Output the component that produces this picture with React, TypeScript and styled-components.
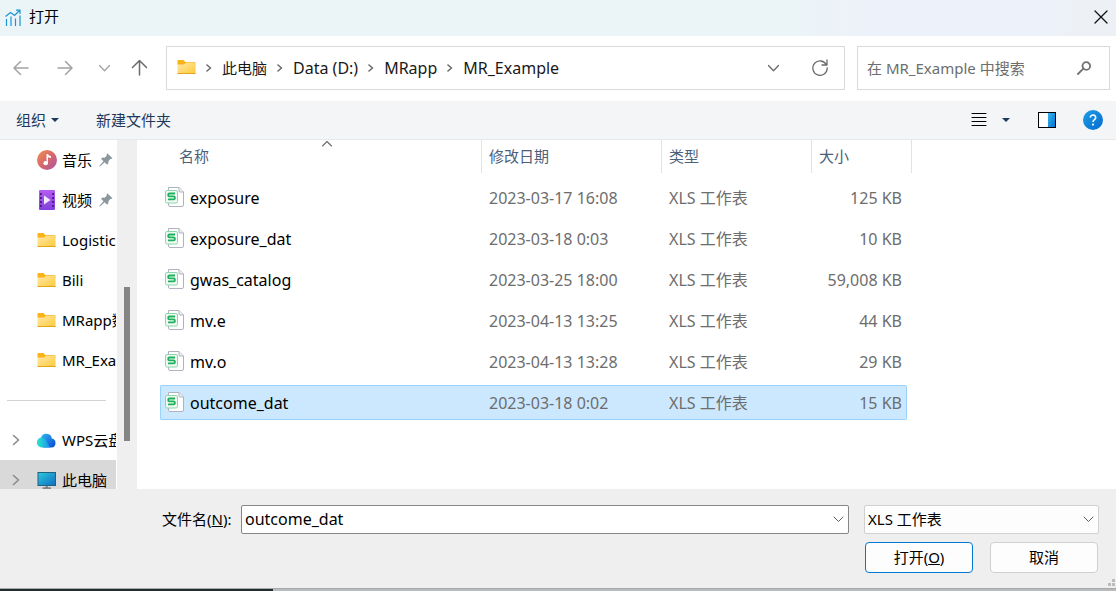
import React, { useState } from "react";
import styled, { createGlobalStyle, css } from "styled-components";

const GlobalStyle = createGlobalStyle`
  * { box-sizing: border-box; }
  body {
    margin: 0;
    color: #000;
    font: 16px/20px "Noto Sans", "Noto Sans CJK SC", sans-serif;
  }
  button, input, select { font: inherit; color: inherit; }
  svg { display: block; flex: none; }
`;

const Page = styled.div`
  display: flex;
  flex-direction: column;
  height: 100vh;
  background: #fff;
  overflow: hidden;
`;

const TitleBar = styled.header`
  display: flex;
  align-items: center;
  gap: 8px;
  flex: none;
  height: 36px;
  padding: 0 8px 2px 5px;
  background: linear-gradient(90deg, #ebf4f7 0 72%, #edf2fa 78% 94%, #edf1f6 96%);
`;

const Title = styled.h1`
  flex: 1;
  margin: 0;
  padding-bottom: 2px;
  font-size: 15px;
  font-weight: 400;
`;

const IconButton = styled.button`
  display: flex;
  align-items: center;
  justify-content: center;
  padding: 0;
  border: 0;
  background: none;
`;

const NavBar = styled.nav`
  display: flex;
  align-items: center;
  gap: 12px;
  flex: none;
  height: 65px;
  padding: 0 6px 2px 13px;
`;

const NavButtons = styled.div`
  display: flex;
  align-items: center;
  gap: 26px;
  width: 141px;
`;

const NavEnd = styled.div`
  display: flex;
  align-items: center;
  gap: 20px;
`;

const AddressBar = styled.div`
  display: flex;
  align-items: center;
  flex: 1;
  min-width: 0;
  height: 44px;
  padding: 0 16px 0 10px;
  border: 1px solid #d9d9d9;
`;

const Crumbs = styled.ol`
  display: flex;
  align-items: center;
  flex: 1;
  margin: 0;
  padding: 0 0 0 10px;
  list-style: none;
`;

const Crumb = styled.li`
  display: flex;
  align-items: center;
  gap: 10px;
  margin-right: 10px;
  white-space: nowrap;
`;

const CrumbLink = styled.a<{ $cjk?: boolean }>`
  color: #191919;
  font-size: ${(p) => (p.$cjk ? 15 : 16)}px;
  text-decoration: none;
`;

const AddressActions = styled.div`
  display: flex;
  align-items: center;
  gap: 32px;
`;

const SearchBox = styled.div`
  display: flex;
  align-items: center;
  width: 253px;
  height: 44px;
  padding: 0 18px 0 9px;
  border: 1px solid #d9d9d9;
`;

const SearchInput = styled.input`
  flex: 1;
  min-width: 0;
  padding: 0;
  border: 0;
  outline: 0;
  background: none;
  font-size: 15px;
  &::placeholder { color: #6d6d6d; opacity: 1; }
`;

const Toolbar = styled.div`
  display: flex;
  align-items: center;
  gap: 37px;
  flex: none;
  height: 39px;
  padding: 0 13px 0 16px;
  border-bottom: 1px solid #e6e8ea;
  background: #f4f5f7;
`;

const ToolButton = styled.button`
  display: flex;
  align-items: center;
  gap: 5px;
  padding: 0;
  border: 0;
  background: none;
  color: #1e395b;
  font-size: 15px;
`;

const ToolbarEnd = styled.div`
  display: flex;
  align-items: center;
  gap: 27px;
  margin-left: auto;
`;

const ViewControls = styled.div`
  display: flex;
  align-items: center;
  gap: 15px;
  padding-right: 1px;
`;

const Main = styled.main`
  display: flex;
  flex: 1;
  min-height: 0;
`;

const Sidebar = styled.ul`
  width: 116px;
  margin: 0;
  padding: 0;
  overflow: hidden;
  list-style: none;
`;

const SideItem = styled.li<{ $active?: boolean }>`
  display: grid;
  grid-template-columns: 20px 20px max-content 16px;
  column-gap: 5px;
  align-items: center;
  justify-items: start;
  height: 40px;
  padding-left: 12px;
  background: ${(p) => (p.$active ? "#d9d9d9" : "transparent")};
  white-space: nowrap;
`;

const SideLabel = styled.a`
  color: #000;
  font-size: 15px;
  text-decoration: none;
`;

const PinSlot = styled.span`
  justify-self: end;
`;

const Divider = styled.li`
  display: flex;
  align-items: center;
  height: 40px;
  padding: 0 10px 0 7px;
  &::after { content: ""; flex: 1; height: 1px; background: #d2d2d2; }
`;

const ScrollTrack = styled.div`
  display: flex;
  flex-direction: column;
  align-items: center;
  flex: none;
  width: 20px;
  margin-left: 1px;
  padding-top: 147px;
  background: #efefef;
`;

const ScrollThumb = styled.div`
  width: 6px;
  height: 76%;
  background: #858585;
`;

const FilePane = styled.section`
  flex: 1;
  min-width: 0;
  padding-left: 23px;
  overflow: hidden;
`;

const FileTable = styled.table`
  width: 752px;
  table-layout: fixed;
  border-collapse: collapse;
  th, td { padding: 0; font-weight: 400; text-align: left; }
`;

const HeadCell = styled.div<{ $first?: boolean }>`
  position: relative;
  height: 33px;
  margin-bottom: 4px;
  padding: 6px 0 0 ${(p) => (p.$first ? 19 : 7)}px;
  border-right: 1px solid #e3e3e3;
  color: #4c607a;
  font-size: 15px;
`;

const SortMark = styled.span`
  position: absolute;
  top: 0;
  left: 50%;
`;

const RowCell = styled.div<{ $selected?: boolean; $edge?: "start" | "end" }>`
  display: flex;
  align-items: center;
  justify-content: ${(p) => (p.$edge === "end" ? "flex-end" : "flex-start")};
  height: 35px;
  margin: 3px 0;
  padding: ${(p) => (p.$edge === "start" ? "0 0 0 5px" : p.$edge === "end" ? "0 5px 0 0" : "0 0 0 7px")};
  border: 0 solid transparent;
  border-width: 1px 0;
  color: ${(p) => (p.$edge === "start" ? "#000" : "#6d6d6d")};
  gap: 6px;
  svg { margin-bottom: 2px; }
  ${(p) => p.$selected && css`
    background: #cce8ff;
    border-color: #99d1ff;
    ${p.$edge === "start" && "border-left-width: 1px; border-radius: 2px 0 0 2px; padding-left: 4px;"}
    ${p.$edge === "end" && "border-right-width: 1px; border-radius: 0 2px 2px 0; padding-right: 4px;"}
  `}
`;

const Footer = styled.footer`
  display: flex;
  flex-direction: column;
  gap: 8px;
  position: relative;
  flex: none;
  padding: 16px 17px 15px 162px;
  border-bottom: 1px solid #a9a9a9;
  background: #efefef;
`;

const FooterRow = styled.div`
  display: flex;
  align-items: center;
  gap: 15px;
`;

const NameLabel = styled.label`
  width: 79px;
  margin-right: -15px;
  padding-bottom: 2px;
  font-size: 15px;
  white-space: nowrap;
`;

const Field = styled.div<{ $filter?: boolean }>`
  display: flex;
  align-items: center;
  flex: ${(p) => (p.$filter ? "0 0 235px" : "1")};
  min-width: 0;
  height: 29px;
  padding-right: 4px;
  border: 1px solid ${(p) => (p.$filter ? "#d0d0d0" : "#868686")};
  border-radius: 2px;
  background: ${(p) => (p.$filter ? "#fdfdfd" : "#fff")};
`;

const fieldText = css`
  flex: 1;
  min-width: 0;
  height: 27px;
  padding: 0 0 2px 3px;
  border: 0;
  outline: 0;
  background: none;
`;

const NameInput = styled.input`${fieldText}`;

const TypeSelect = styled.select`
  ${fieldText}
  appearance: none;
  font-size: 15px;
`;

const Actions = styled.div`
  display: flex;
  justify-content: flex-end;
  gap: 17px;
  padding-right: 1px;
`;

const ActionButton = styled.button<{ $primary?: boolean }>`
  width: 108px;
  height: 31px;
  padding: 0 0 2px;
  border: 1px solid ${(p) => (p.$primary ? "#0078d4" : "#d0d0d0")};
  border-radius: 4px;
  background: #fdfdfd;
  font-size: 15px;
`;

const Grip = styled.svg`
  position: absolute;
  right: 0;
  bottom: 1px;
`;

const Backdrop = styled.div`
  flex: none;
  height: 2px;
  background: linear-gradient(90deg, #1f2d33 0 273px, #b9bcbe 273px);
`;

const Glyph = ({ d, w, h, color = "#6b6b6b", stroke = 1.5 }: { d: string; w: number; h: number; color?: string; stroke?: number }) => (
  <svg width={w} height={h} viewBox={`0 0 ${w} ${h}`} fill="none" stroke={color} strokeWidth={stroke} strokeLinecap="round" strokeLinejoin="round" aria-hidden="true">
    <path d={d} />
  </svg>
);

const Chevron = ({ color = "#6b6b6b" }) => <Glyph w={12} h={8} color={color} stroke={1.3} d="M.5 1.5 5.500 6.8 10.500 1.5" />;
const FieldChevron = () => <Glyph w={11} h={7} color="#5c5c5c" stroke={1} d="M1 1 5.500 5.500 10 1" />;
const Caret = () => (
  <svg width="8" height="4" viewBox="0 0 8 4" aria-hidden="true"><path d="M0 0h8L4 4z" fill="#1e395b" /></svg>
);

const AppLogo = () => (
  <svg width="16" height="17" viewBox="0 0 16 17" fill="none" stroke="#1c94d4" strokeWidth="1.2" aria-hidden="true">
    <path d="M1.5 10v7M6 7.500v9.500M10.500 9.500v7.500M15 6.500v10.500" />
    <path d="M.5 7.500 5.500 3.500 9.500 6.500 14.500 1.500M11 1.200h4v3.800" />
  </svg>
);

const Folder = () => (
  <svg width="19" height="15" viewBox="0 0 19 15" aria-hidden="true">
    <defs>
      <linearGradient id="folder" x1="0" y1="0" x2="1" y2="1">
        <stop offset="0" stopColor="#ffe9a6" /><stop offset="1" stopColor="#ffc938" />
      </linearGradient>
    </defs>
    <path d="M.5 .8Q.5 0 1.300 0h5.200l2 2.200H17.700q.8 0 .8.8V5H.5z" fill="#f9b316" />
    <path d="M.5 4.500h6.500l2-1.500H18.500V13.500q0 .5-.5.5H1q-.5 0-.5-.5z" fill="url(#folder)" />
    <path d="M.5 13h18v.6q0 .4-.5.4H1q-.5 0-.5-.4z" fill="#e6a41c" />
  </svg>
);

const Music = () => (
  <svg width="20" height="20" viewBox="0 0 20 20" aria-hidden="true">
    <defs>
      <linearGradient id="music" x1="0" y1="0" x2="1" y2="1">
        <stop offset="0" stopColor="#f2914f" /><stop offset=".5" stopColor="#d7686c" /><stop offset="1" stopColor="#a655a8" />
      </linearGradient>
    </defs>
    <circle cx="10" cy="10" r="10" fill="url(#music)" />
    <ellipse cx="8.700" cy="13.200" rx="2.300" ry="2.100" fill="#fff" />
    <path d="M9.500 4h1.400q.6 1.800 3 2v1.900q-2 0-3-.9v6.200H9.500z" fill="#fff" />
  </svg>
);

const Video = () => (
  <svg width="20" height="20" viewBox="0 0 20 20" aria-hidden="true">
    <defs>
      <linearGradient id="video" x1="0" y1="0" x2="0" y2="1">
        <stop offset="0" stopColor="#b45cf0" /><stop offset="1" stopColor="#8440dc" />
      </linearGradient>
    </defs>
    <rect x="2" width="16" height="20" rx="1" fill="url(#video)" />
    <path d="M3.900 3v16M16.100 3v16" stroke="#44207e" strokeWidth="1.800" strokeDasharray="2 2" />
    <path d="M7 5.500 13.500 10 7 14.500z" fill="#f1e8fb" />
  </svg>
);

const Cloud = () => (
  <svg width="19" height="15" viewBox="0 0 19 15" aria-hidden="true">
    <defs>
      <linearGradient id="cloudBack" x1="0" y1="0" x2="1" y2="1">
        <stop offset="0" stopColor="#2fb6f4" /><stop offset="1" stopColor="#0a47cf" />
      </linearGradient>
      <linearGradient id="cloudFront" x1="0" y1="0" x2="1" y2="0">
        <stop offset="0" stopColor="#2ce8cb" /><stop offset="1" stopColor="#1590ee" />
      </linearGradient>
    </defs>
    <path d="M4 5a5.500 5.500 0 0 1 10.800.6A4.500 4.500 0 0 1 14.500 14.500H6z" fill="url(#cloudBack)" />
    <path d="M4.800 4.500A5 5 0 0 0 4.800 14.500H13L9.500 8Q8 4.600 4.800 4.500z" fill="url(#cloudFront)" />
  </svg>
);

const Computer = () => (
  <svg width="19" height="17" viewBox="0 0 19 17" aria-hidden="true">
    <defs>
      <linearGradient id="screen" x1="0" y1="0" x2="1" y2="1">
        <stop offset="0" stopColor="#2ccbe0" /><stop offset="1" stopColor="#0f6cbd" />
      </linearGradient>
    </defs>
    <rect x="1" y=".5" width="17.500" height="13" fill="url(#screen)" stroke="#22617f" />
    <path d="M8.500 14H11v2H8.500z" fill="#8a9298" /><path d="M5.500 15.500H14v1.200H5.500z" fill="#5c6166" />
  </svg>
);

const Pin = () => (
  <svg width="14" height="14" viewBox="0 0 14 14" fill="#8b969e" aria-hidden="true">
    <path d="M8.200.3 13.500 5.300Q12.500 6.300 11.400 6L9.400 8.200Q9.900 10.500 8.300 11.700L5.600 9.200 1 13.600.3 13 4.500 8.200 2 5.700Q3.200 4.200 5.700 4.700L7.800 2.500Q7.300 1.300 8.200.3z" />
  </svg>
);

const SheetIcon = () => (
  <svg width="19" height="20" viewBox="0 0 19 20" fill="none" aria-hidden="true">
    <path d="M3.500.5h10.500l4.500 4.500V18q0 1.500-1.500 1.500H5q-1.500 0-1.500-1.500z" fill="#fff" stroke="#afb3bf" />
    <path d="M14 .5V4q0 1 1 1h3.500" fill="#eceef2" stroke="#afb3bf" />
    <rect x=".5" y="3.500" width="12" height="12.500" rx="1.500" fill="#effaf3" stroke="#8bd7aa" />
    <path d="M10 6.500H4.500q-1.300 0-1.300 1.400T4.500 9.400h4q1.400 0 1.400 1.500t-1.400 1.500H3" stroke="#1eb15d" strokeWidth="1.900" />
  </svg>
);

const Side = ({ icon, label, pinned, expandable, active }: { icon: React.ReactNode; label: string; pinned?: boolean; expandable?: boolean; active?: boolean }) => (
  <SideItem $active={active}>
    {expandable ? <IconButton aria-label={`展开 ${label}`}><Glyph w={8} h={12} color="#8a8a8a" stroke={1.6} d="M1.500 1.500 6.500 6 1.500 10.500" /></IconButton> : <span />}
    {icon}
    <SideLabel href="#">{label}</SideLabel>
    {pinned && <PinSlot><Pin /></PinSlot>}
  </SideItem>
);

const files = [
  ["exposure", "2023-03-17 16:08", "125 KB"],
  ["exposure_dat", "2023-03-18 0:03", "10 KB"],
  ["gwas_catalog", "2023-03-25 18:00", "59,008 KB"],
  ["mv.e", "2023-04-13 13:25", "44 KB"],
  ["mv.o", "2023-04-13 13:28", "29 KB"],
  ["outcome_dat", "2023-03-18 0:02", "15 KB"],
];

const crumbs = ["此电脑", "Data (D:)", "MRapp", "MR_Example"];

export default function App() {
  const [selected, setSelected] = useState("outcome_dat");

  return (
    <Page>
      <GlobalStyle />
      <TitleBar>
        <AppLogo />
        <Title>打开</Title>
        <IconButton aria-label="关闭"><Glyph w={14} h={14} color="#111" stroke={1.3} d="M1 1 13 13M13 1 1 13" /></IconButton>
      </TitleBar>

      <NavBar>
        <NavButtons>
          <IconButton aria-label="后退"><Glyph w={17} h={16} color="#a3a3a3" d="M15 8H1M7.500 1.500 1 8 7.500 14.500" /></IconButton>
          <IconButton aria-label="前进"><Glyph w={17} h={16} color="#a3a3a3" d="M2 8H16M9.500 1.500 16 8 9.500 14.500" /></IconButton>
          <NavEnd>
            <IconButton aria-label="最近的位置"><Chevron color="#a3a3a3" /></IconButton>
            <IconButton aria-label="向上"><Glyph w={17} h={17} d="M8.500 16V1.500M1.500 8.500 8.500 1.500 15.500 8.500" /></IconButton>
          </NavEnd>
        </NavButtons>
        <AddressBar>
          <Folder />
          <Crumbs>
            {crumbs.map((c, i) => (
              <Crumb key={c}>
                <Glyph w={6} h={8} stroke={1.6} d="M1 1 4.500 4 1 7" />
                <CrumbLink href="#" $cjk={i === 0}>{c}</CrumbLink>
              </Crumb>
            ))}
          </Crumbs>
          <AddressActions>
            <IconButton aria-label="以前的位置"><Chevron /></IconButton>
            <IconButton aria-label="刷新"><Glyph w={16} h={17} stroke={1.3} d="M14.500 6A7.200 7.200 0 1 0 15.200 8.800M15 1V6H10" /></IconButton>
          </AddressActions>
        </AddressBar>
        <SearchBox>
          <SearchInput aria-label="搜索" placeholder="在 MR_Example 中搜索" />
          <IconButton aria-label="搜索"><Glyph w={14} h={14} color="#707070" stroke={1.8} d="M5.800 8.200 1 13M5.500 5a3.800 3.800 0 1 0 7.600 0a3.800 3.800 0 1 0-7.600 0" /></IconButton>
        </SearchBox>
      </NavBar>

      <Toolbar>
        <ToolButton>组织<Caret /></ToolButton>
        <ToolButton>新建文件夹</ToolButton>
        <ToolbarEnd>
          <ViewControls>
            <IconButton aria-label="视图"><Glyph w={16} h={14} color="#000" stroke={1} d="M1 .5h14M1 4.500h14M1 8.500h14M1 12.500h14" /></IconButton>
            <IconButton aria-label="更多视图"><Caret /></IconButton>
          </ViewControls>
          <IconButton aria-label="预览窗格">
            <svg width="18" height="16" viewBox="0 0 18 16" aria-hidden="true">
              <defs><linearGradient id="pane" x1="0" y1="0" x2="1" y2="1"><stop offset="0" stopColor="#35b5ec" /><stop offset="1" stopColor="#0873d1" /></linearGradient></defs>
              <rect x=".5" y=".5" width="17" height="15" fill="#fff" stroke="#000" /><rect x="10" y="1" width="7" height="14" fill="url(#pane)" />
            </svg>
          </IconButton>
          <IconButton aria-label="帮助">
            <svg width="20" height="20" viewBox="0 0 20 20" fill="none" aria-hidden="true">
              <defs><linearGradient id="help" x1="0" y1="0" x2="1" y2="1"><stop offset="0" stopColor="#1da0e6" /><stop offset="1" stopColor="#0769cf" /></linearGradient></defs>
              <circle cx="10" cy="10" r="10" fill="url(#help)" />
              <path d="M7.300 7.500a2.700 2.500 0 1 1 4.200 2.100Q10 10.600 10 12" stroke="#fff" strokeWidth="1.600" /><circle cx="10" cy="14.600" r="1.100" fill="#fff" />
            </svg>
          </IconButton>
        </ToolbarEnd>
      </Toolbar>

      <Main>
        <Sidebar>
          <Side icon={<Music />} label="音乐" pinned />
          <Side icon={<Video />} label="视频" pinned />
          <Side icon={<Folder />} label="Logistic" />
          <Side icon={<Folder />} label="Bili" />
          <Side icon={<Folder />} label="MRapp数据" />
          <Side icon={<Folder />} label="MR_Example" />
          <Divider role="separator" />
          <Side icon={<Cloud />} label="WPS云盘" expandable />
          <Side icon={<Computer />} label="此电脑" expandable active />
        </Sidebar>
        <ScrollTrack aria-hidden="true"><ScrollThumb /></ScrollTrack>
        <FilePane>
          <FileTable>
            <colgroup>
              <col style={{ width: 322 }} /><col style={{ width: 180 }} /><col style={{ width: 150 }} /><col style={{ width: 95 }} /><col />
            </colgroup>
            <thead>
              <tr>
                <th><HeadCell $first>名称<SortMark><Glyph w={12} h={7} stroke={1.1} d="M1.500 6 6 1.500 10.500 6" /></SortMark></HeadCell></th>
                <th><HeadCell>修改日期</HeadCell></th>
                <th><HeadCell>类型</HeadCell></th>
                <th colSpan={2}><HeadCell>大小</HeadCell></th>
              </tr>
            </thead>
            <tbody>
              {files.map(([name, date, size]) => {
                const on = name === selected;
                return (
                  <tr key={name} onClick={() => setSelected(name)} aria-selected={on}>
                    <td><RowCell $edge="start" $selected={on}><SheetIcon />{name}</RowCell></td>
                    <td><RowCell $selected={on}>{date}</RowCell></td>
                    <td><RowCell $selected={on}>XLS 工作表</RowCell></td>
                    <td><RowCell $edge="end" $selected={on}>{size}</RowCell></td>
                    <td />
                  </tr>
                );
              })}
            </tbody>
          </FileTable>
        </FilePane>
      </Main>

      <Footer>
        <FooterRow>
          <NameLabel htmlFor="filename">文件名(<u>N</u>):</NameLabel>
          <Field>
            <NameInput id="filename" value={selected} onChange={(e) => setSelected(e.target.value)} />
            <FieldChevron />
          </Field>
          <Field $filter>
            <TypeSelect aria-label="文件类型"><option>XLS 工作表</option></TypeSelect>
            <FieldChevron />
          </Field>
        </FooterRow>
        <Actions>
          <ActionButton $primary>打开(<u>O</u>)</ActionButton>
          <ActionButton>取消</ActionButton>
        </Actions>
        <Grip width="8" height="8" viewBox="0 0 8 8" fill="#bdbdbd" aria-hidden="true">
          <path d="M4 0h3v3H4zM0 4h3v3H0zM4 4h3v3H4z" />
        </Grip>
      </Footer>
      <Backdrop />
    </Page>
  );
}
